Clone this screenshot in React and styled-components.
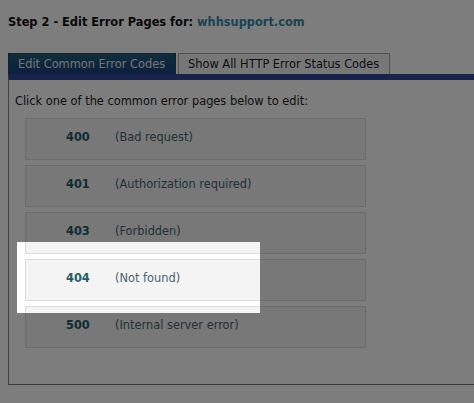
import React from "react";
import styled, { createGlobalStyle } from "styled-components";

const Global = createGlobalStyle`
  html, body {
    margin: 0;
    padding: 0;
    background: #fff;
    overflow: hidden;
  }
  body {
    font-family: "DejaVu Sans", Verdana, sans-serif;
    color: #222;
  }
`;

const Page = styled.div`
  position: relative;
  width: 474px;
  height: 403px;
  overflow: hidden;
  padding: 15px 0 0 8px;
  box-sizing: border-box;
`;

const Title = styled.h2`
  margin: 0;
  font-size: 11.4px;
  line-height: 14px;
  font-weight: bold;
  color: #111;

  & span {
    color: #3a8aa8;
  }
`;

const Tabs = styled.div`
  display: flex;
  gap: 2px;
  margin-top: 24px;
  height: 21px;
`;

const Tab = styled.div`
  box-sizing: border-box;
  height: 21px;
  display: flex;
  align-items: center;
  padding: 0 6px 0 9px;
  font-size: 11.4px;
  white-space: nowrap;
  border: 1px solid ${(p) => (p.$active ? "#1d4a66" : "#a8a8a8")};
  border-bottom: none;
  background: ${(p) =>
    p.$active ? "linear-gradient(#215f78, #1a3f80)" : "#f2f2f2"};
  color: ${(p) => (p.$active ? "#e4ecf0" : "#1c1c1c")};
  width: ${(p) => p.$w}px;
`;

const Panel = styled.div`
  width: 520px;
  height: 311px;
  box-sizing: border-box;
  border-top: 6px solid #30489e;
  border-left: 1px solid #888;
  border-bottom: 1px solid #777;
  padding: 14px 0 0 6px;
`;

const Intro = styled.p`
  margin: 0 0 10px;
  font-size: 11.4px;
  line-height: 14px;
  color: #222;
`;

const List = styled.div`
  display: flex;
  flex-direction: column;
  gap: 5px;
  margin-left: 10px;
  width: 341px;
`;

const Row = styled.div`
  box-sizing: border-box;
  height: 42px;
  display: flex;
  align-items: flex-start;
  padding: 11px 0 0 40px;
  background: #f4f4f4;
  border: 1px solid #dcdcdc;
  font-size: 11.4px;
  line-height: 14px;
`;

const Code = styled.span`
  width: 49px;
  font-weight: bold;
  color: #275b63;
`;

const Desc = styled.span`
  color: #4c6470;
`;

const Spotlight = styled.div`
  position: absolute;
  left: 17px;
  top: 242px;
  width: 243px;
  height: 71px;
  box-shadow: 0 0 0 1200px rgba(0, 0, 0, 0.51);
  pointer-events: none;
`;

const codes = [
  ["400", "(Bad request)"],
  ["401", "(Authorization required)"],
  ["403", "(Forbidden)"],
  ["404", "(Not found)"],
  ["500", "(Internal server error)"],
];

const App = () => {
  return (
    <>
      <Global />
      <Page>
        <Title>
          Step 2 - Edit Error Pages for: <span>whhsupport.com</span>
        </Title>
        <Tabs>
          <Tab $active $w={168}>Edit Common Error Codes</Tab>
          <Tab $w={212}>Show All HTTP Error Status Codes</Tab>
        </Tabs>
        <Panel>
          <Intro>Click one of the common error pages below to edit:</Intro>
          <List>
            {codes.map(([code, desc]) => (
              <Row key={code}>
                <Code>{code}</Code>
                <Desc>{desc}</Desc>
              </Row>
            ))}
          </List>
        </Panel>
        <Spotlight />
      </Page>
    </>
  );
};

export default App;
